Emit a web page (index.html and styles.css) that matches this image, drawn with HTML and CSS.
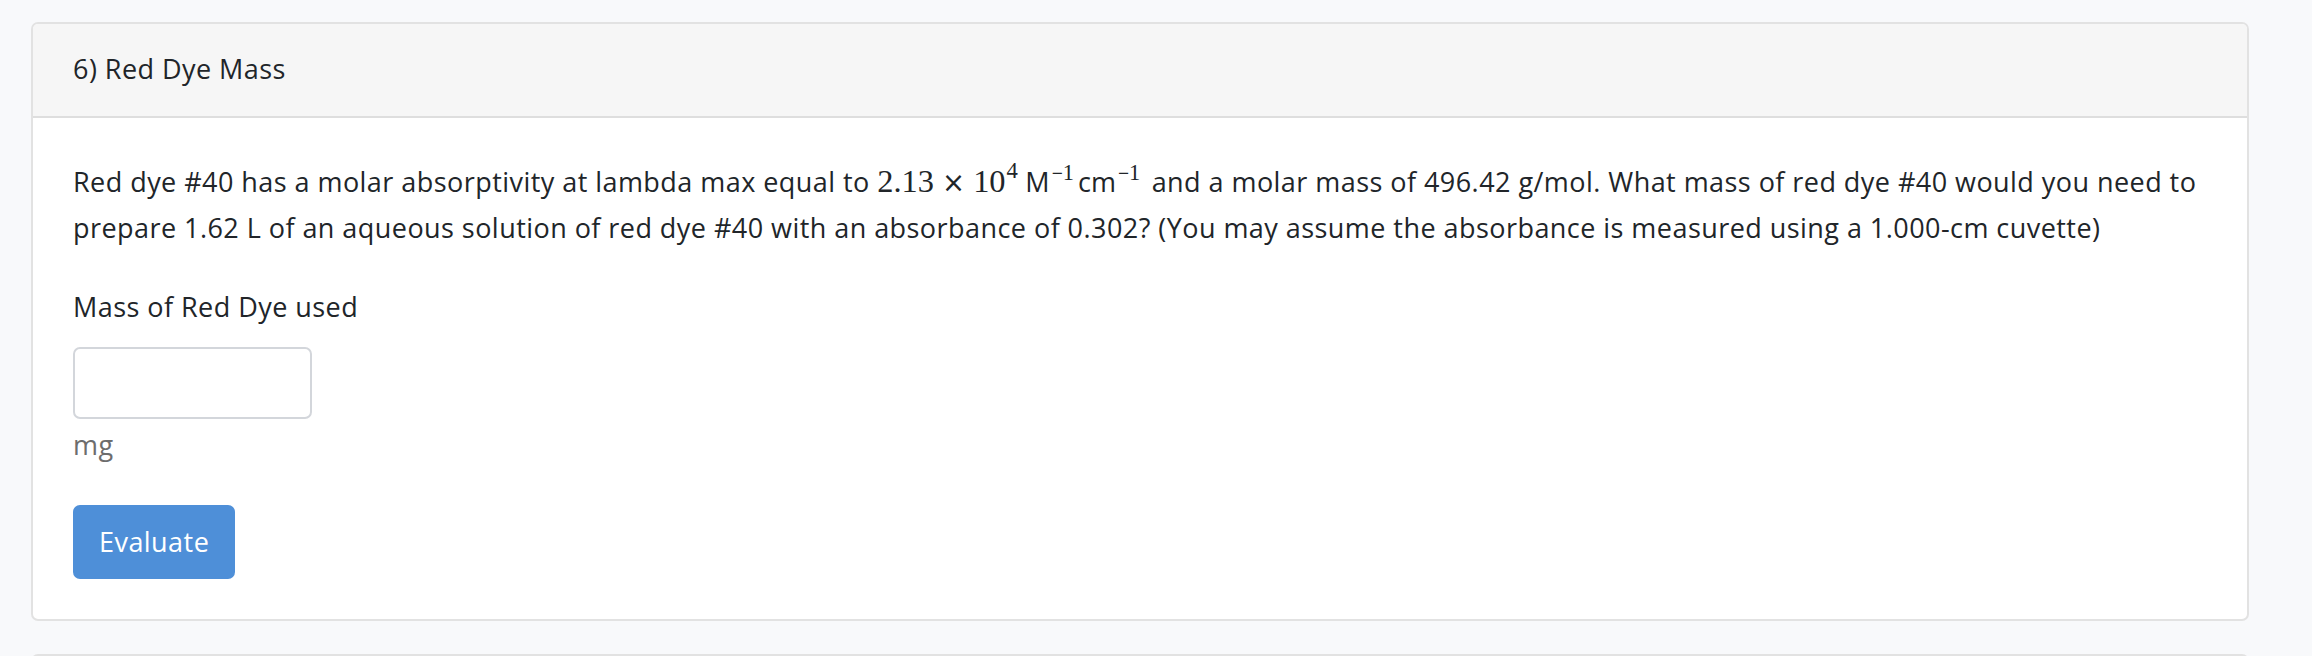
FILE: index.html
```html
<!DOCTYPE html>
<html lang="en">
<head>
    <meta charset="UTF-8">
    <meta name="viewport" content="width=device-width, initial-scale=1.0">
    <title>Red Dye Mass</title>
    <link rel="stylesheet" href="styles.css">
</head>
<body>
    <div class="question-list">
        <div class="card">
            <div class="card-header">6) Red Dye Mass</div>
            <div class="card-body">
                <p class="question-text"><span>Red dye #40 has a molar absorptivity at lambda max equal to</span> <span class="math">2.13 <span class="times">&times;</span> 10<sup class="math-sup">4</sup></span> <span class="unit">M<sup class="unit-sup">&minus;<span class="math-num">1</span></sup>cm<sup class="unit-sup">&minus;<span class="math-num">1</span></sup></span> <span>and a molar mass of 496.42 g/mol. What mass of red dye #40 would you need to</span> <span>prepare 1.62 L of an aqueous solution of red dye #40 with an absorbance of 0.302? (You may assume the absorbance is measured using a 1.000-cm cuvette)</span></p>

                <label class="answer-label" for="mass-input">Mass of Red Dye used</label>
                <input id="mass-input" class="answer-input" type="text">
                <div class="answer-unit">mg</div>

                <button class="btn-evaluate" type="button">Evaluate</button>
            </div>
        </div>

        <div class="card card-next">
            <div class="card-header"></div>
        </div>
    </div>
</body>
</html>
```

FILE: styles.css
```css
body {
    margin: 0;
    padding: 22px 63px 0 31px;
    background-color: #f8f9fb;
    font-family: "Open Sans", "Noto Sans", sans-serif;
    font-size: 27px;
    line-height: 46px;
    letter-spacing: 0.45px;
    color: #212529;
    overflow: hidden;
}

.question-list {
    display: flex;
    flex-direction: column;
    gap: 33px;
}

.card {
    background-color: #fff;
    border: 2px solid #e2e2e2;
    border-radius: 7px;
    overflow: hidden;
}

.card-header {
    padding: 22px 40px 24px;
    background-color: #f6f6f6;
    border-bottom: 2px solid #dedede;
}

.card-body {
    display: flex;
    flex-direction: column;
    align-items: flex-start;
    padding: 40px;
}

.question-text {
    margin: 0 0 33px;
}

/* formula pieces */
.math {
    font-family: "Liberation Serif", "DejaVu Serif", serif;
    font-size: 1.2em;
    letter-spacing: 0;
}

.times {
    font-family: "DejaVu Sans", sans-serif;
    font-size: 0.85em;
}

.math-sup {
    font-size: 0.7em;
    line-height: 1;
    vertical-align: 0.6em;
    margin-left: 1px;
}

.unit {
    letter-spacing: 0;
}

.unit-sup {
    font-size: 0.72em;
    line-height: 1;
    vertical-align: 0.6em;
    margin-left: 2px;
    margin-right: 4px;
}

.math-num {
    font-family: "Liberation Serif", serif;
    font-size: 1.15em;
}

.answer-label {
    margin-bottom: 17px;
}

.answer-input {
    box-sizing: border-box;
    width: 239px;
    height: 72px;
    margin: 0 0 3px;
    border: 2px solid #d3d6db;
    border-radius: 7px;
    background-color: #fff;
}

.answer-unit {
    color: #6d6d6d;
    margin-bottom: 37px;
}

.btn-evaluate {
    padding: 14px 26px;
    font-family: inherit;
    font-size: 27px;
    line-height: 46px;
    letter-spacing: 0.45px;
    color: #fff;
    background-color: #4e8fd8;
    border: none;
    border-radius: 7px;
}

.card-next {
    height: 40px;
    border-bottom: none;
    border-radius: 7px 7px 0 0;
}

.card-next .card-header {
    height: 100%;
    padding: 0;
    border-bottom: none;
}
```
